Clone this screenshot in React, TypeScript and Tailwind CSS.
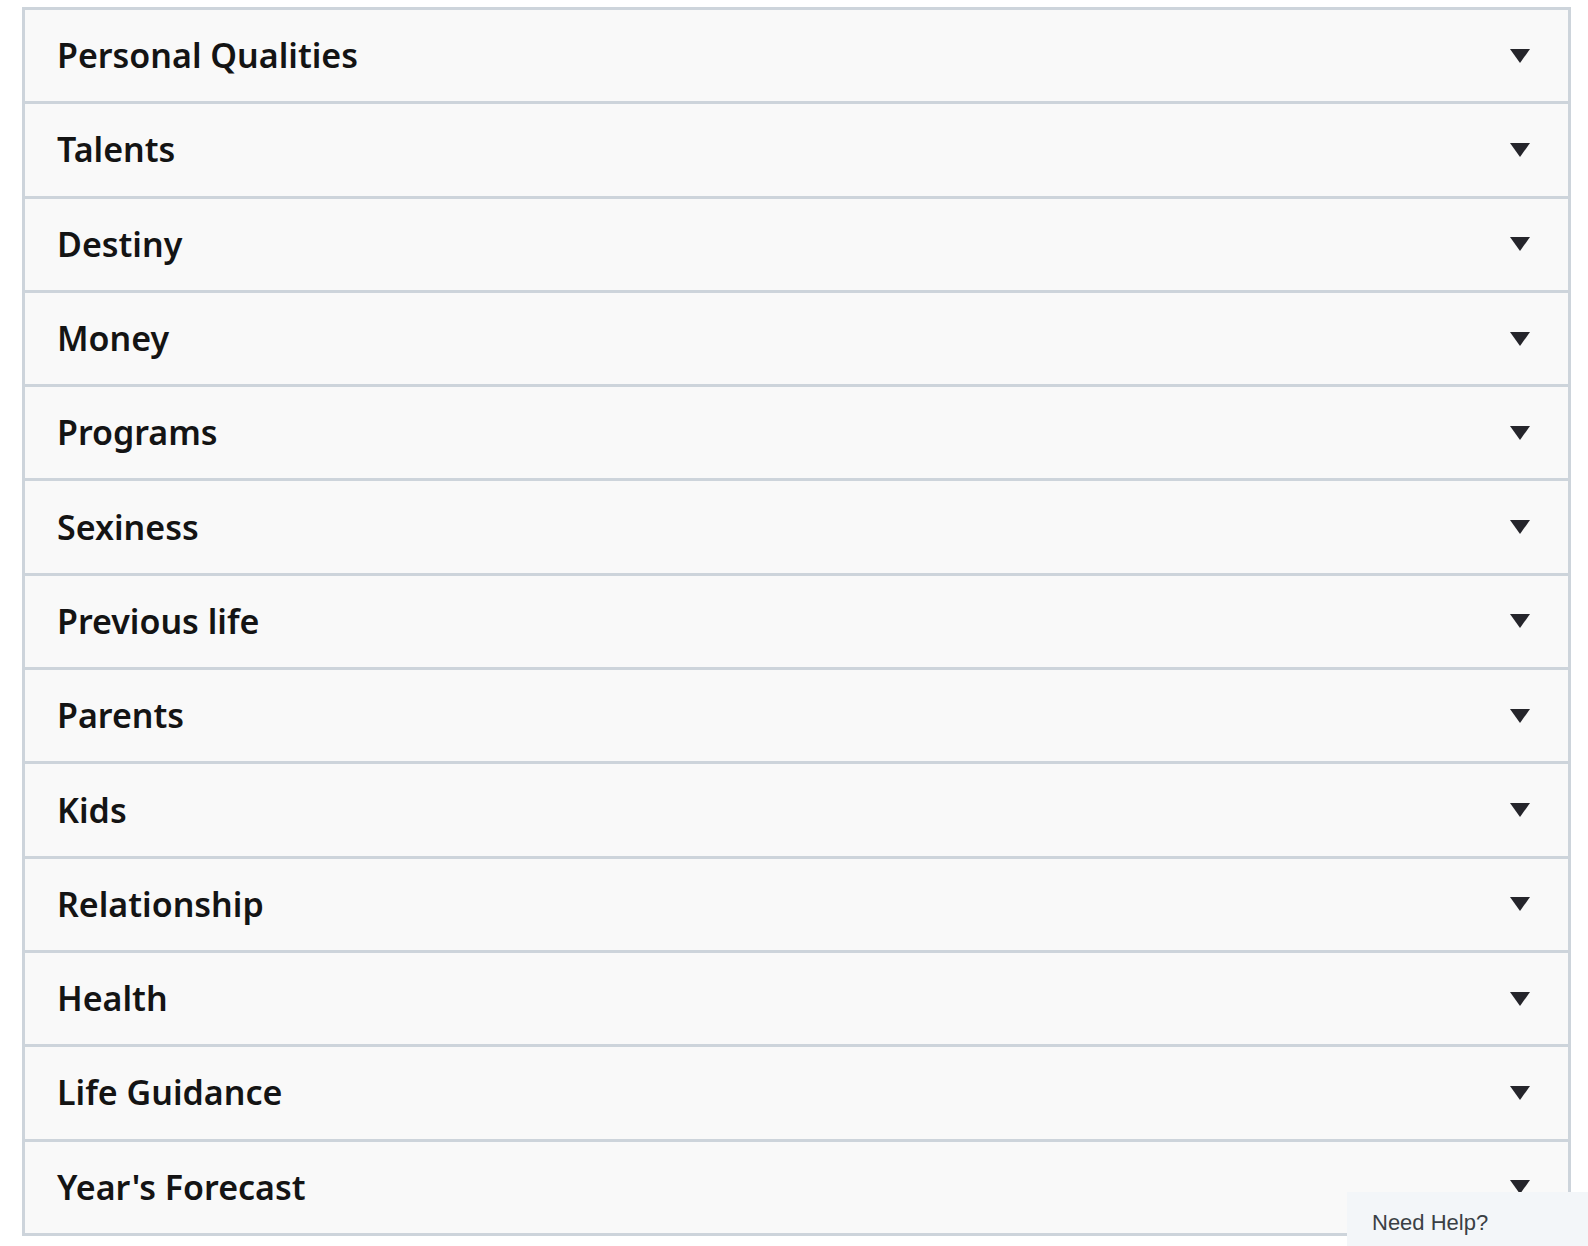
const sections = [
  "Personal Qualities",
  "Talents",
  "Destiny",
  "Money",
  "Programs",
  "Sexiness",
  "Previous life",
  "Parents",
  "Kids",
  "Relationship",
  "Health",
  "Life Guidance",
  "Year's Forecast",
];

function Caret() {
  return (
    <svg width="20" height="14" viewBox="0 0 20 14" className="shrink-0">
      <polygon points="0,0 20,0 10,14" fill="#25252b" />
    </svg>
  );
}

export default function App() {
  return (
    <div className="relative min-h-[1246px] bg-white pt-[7px] pl-[22px]">
      <div className="w-[1549px] border-x-[3px] border-t-[3px] border-[#cdd4db] bg-[#f9f9f9]">
        {sections.map((title) => (
          <button
            key={title}
            type="button"
            className="flex h-[94.3px] w-full items-center justify-between border-b-[3px] border-[#cdd4db] pl-[32px] pr-[38px] text-left"
          >
            <span className="font-['Noto_Sans',sans-serif] text-[34px] font-semibold text-[#141414] [font-variant-ligatures:none]">
              {title}
            </span>
            <Caret />
          </button>
        ))}
      </div>

      <div className="fixed bottom-0 right-0 h-[54px] w-[241px] bg-[#f3f6f9] pl-[25px] pt-[14px]">
        <span className="font-['Liberation_Sans',Arial,sans-serif] text-[22px] text-[#3a3f45]">
          Need Help?
        </span>
      </div>
    </div>
  );
}
